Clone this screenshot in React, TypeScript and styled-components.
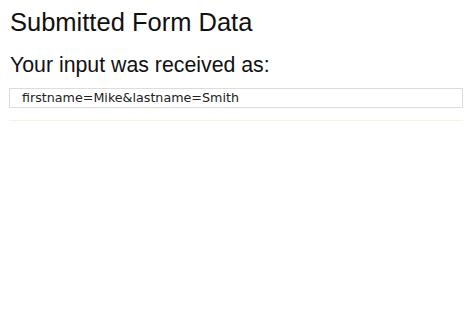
import styled, { createGlobalStyle } from "styled-components";

const Global = createGlobalStyle`
  body{
    margin:0;
    background:#fff;
    font-family:"Liberation Sans", Arial, sans-serif;
    color:#111;
  }
`;

const Page = styled.div`
  padding:8px 11px 0 9px;
`;

const Title = styled.h1`
  margin:0;
  padding-left:1px;
  font-size:25.5px;
  font-weight:normal;
  line-height:28px;
`;

const SubTitle = styled.h2`
  margin:17px 0 0 0;
  padding-left:1px;
  font-size:21.3px;
  font-weight:normal;
  line-height:24px;
`;

const Output = styled.div`
  margin-top:11px;
  height:18px;
  border:1px solid #dcdcdc;
  padding:0 12px;
  font-family:"DejaVu Sans", Verdana, sans-serif;
  font-size:12.7px;
  line-height:18px;
  color:#222;
`;

const Rule = styled.hr`
  margin:12px 0 0 0;
  border:none;
  border-top:1px solid #f4f4d8;
`;

export default function App(){
  return (
    <>
      <Global />
      <Page>
        <Title>Submitted Form Data</Title>
        <SubTitle>Your input was received as:</SubTitle>
        <Output>firstname=Mike&amp;lastname=Smith</Output>
        <Rule />
      </Page>
    </>
  );
}
